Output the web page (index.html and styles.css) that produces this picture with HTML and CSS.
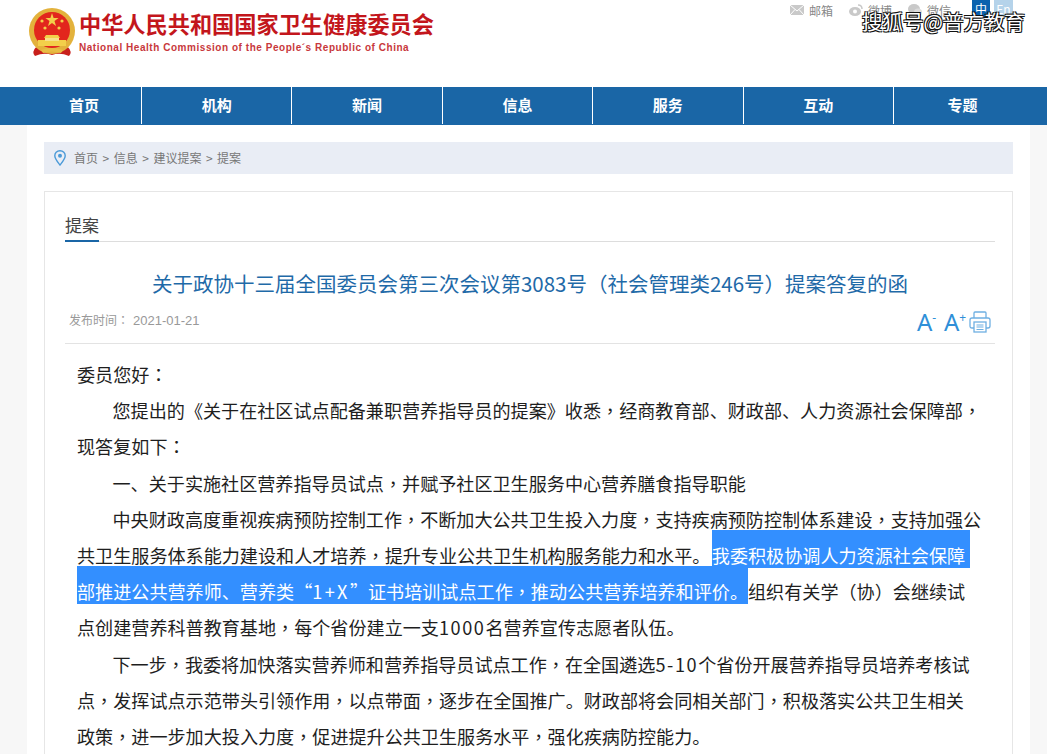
FILE: index.html
```html
<!DOCTYPE html>
<html>
<head>
    <meta charset="UTF-8">
    <title>关于政协十三届全国委员会第三次会议第3083号（社会管理类246号）提案答复的函</title>
    <link rel="stylesheet" href="styles.css">
</head>
<body>
    <header class="header">
        <div class="logo">
            <svg class="emblem" width="48" height="50" viewBox="0 0 48 50">
                <path d="M9 38 Q3 44 7 48 Q16 44 24 47 Q32 44 41 48 Q45 44 39 38 Z" fill="#c8201c"/>
                <circle cx="24" cy="23" r="23" fill="#e3b23c"/>
                <circle cx="24" cy="22" r="18" fill="#e2261d"/>
                <polygon points="24,5 25.6,10 30.6,10 26.5,13 28,18 24,15 20,18 21.5,13 17.400,10 22.400,10" fill="#f3cf4a"/>
                <circle cx="14" cy="13" r="1.600" fill="#f3cf4a"/>
                <circle cx="34" cy="13" r="1.600" fill="#f3cf4a"/>
                <circle cx="17" cy="20" r="1.600" fill="#f3cf4a"/>
                <circle cx="31" cy="20" r="1.600" fill="#f3cf4a"/>
                <path d="M18 27 H30 L32 30 H16 Z" fill="#f3cf4a"/>
                <rect x="10" y="32" width="28" height="6" fill="#f3cf4a"/>
                <rect x="17" y="30" width="14" height="3" fill="#f7e08a"/>
                <path d="M13 42 Q24 38 35 42 L33 45 Q24 42 15 45 Z" fill="#e8bd45"/>
            </svg>
            <div class="logo-text">
                <div class="logo-cn">中华人民共和国国家卫生健康委员会</div>
                <div class="logo-en">National Health Commission of the People´s Republic of China</div>
            </div>
        </div>
        <div class="top-links">
            <span class="top-link">
                <svg width="14" height="10" viewBox="0 0 14 10"><rect width="14" height="10" fill="#c9c9c9"/><path d="M0 0 L7 6 L14 0 M0 10 L5 4.500 M14 10 L9 4.500" fill="none" stroke="#fff" stroke-width="1"/></svg>
                邮箱
            </span>
            <span class="top-link">
                <svg width="14" height="12" viewBox="0 0 14 12"><ellipse cx="6" cy="7.500" rx="6" ry="4.500" fill="#c9c9c9"/><circle cx="6" cy="7.500" r="2" fill="#fff"/><path d="M9 1 Q13 1 13 5" fill="none" stroke="#c9c9c9" stroke-width="1.500"/></svg>
                微博
            </span>
            <span class="top-link">
                <svg width="14" height="12" viewBox="0 0 14 12"><ellipse cx="6" cy="5" rx="6" ry="5" fill="#c9c9c9"/><ellipse cx="10" cy="8" rx="4" ry="3.500" fill="#dcdcdc"/></svg>
                微信
            </span>
            <span class="lang lang-cn">中</span>
            <span class="lang lang-en">En</span>
        </div>
        <div class="watermark">搜狐号@普方教育</div>
    </header>

    <nav class="nav">
        <a class="nav-item nav-first">首页</a>
        <a class="nav-item">机构</a>
        <a class="nav-item">新闻</a>
        <a class="nav-item">信息</a>
        <a class="nav-item">服务</a>
        <a class="nav-item">互动</a>
        <a class="nav-item nav-last">专题</a>
    </nav>

    <main class="main">
        <div class="crumbs">
            <svg class="pin" width="12" height="16" viewBox="0 0 12 16"><path d="M6 .8 C2.800 .8 .8 3.200 .8 5.800 C.8 9 4 12.500 6 15 C8 12.500 11.200 9 11.200 5.800 C11.200 3.200 9.200 .8 6 .8 Z" fill="none" stroke="#4a9ad8" stroke-width="1.400"/><circle cx="6" cy="5.800" r="2" fill="#4a9ad8"/></svg>
            <span>首页</span><i>&gt;</i><span>信息</span><i>&gt;</i><span>建议提案</span><i>&gt;</i><span>提案</span>
        </div>

        <section class="card">
            <div class="tabs"><span class="tab">提案</span></div>
            <h1 class="title">关于政协十三届全国委员会第三次会议第3083号<span class="cp">（</span>社会管理类246号<span class="cp">）</span>提案答复的函</h1>
            <div class="meta">
                <span class="date">发布时间<span class="cp">：</span><span class="date-num">2021-01-21</span></span>
                <div class="tools">
                    <span class="font-btn">A<sup>-</sup></span>
                    <span class="font-btn">A<sup>+</sup></span>
                    <svg class="print" width="22" height="22" viewBox="0 0 22 22" fill="none" stroke="#6fb0e2" stroke-width="1.300">
                        <path d="M5 7 V2 Q5 1 6 1 H16 Q17 1 17 2 V7"/>
                        <path d="M5 17 H3 Q1 17 1 15 V9 Q1 7 3 7 H19 Q21 7 21 9 V15 Q21 17 19 17 H17"/>
                        <rect x="5" y="11" width="12" height="10" fill="#fff"/>
                        <path d="M7.500 14 H14.500 M7.500 16 H14.500 M7.500 18.500 H14.500" stroke-width="1.200"/>
                    </svg>
                </div>
            </div>
            <div class="content">
                <p>委员您好<span class="cp">：</span></p>
                <p class="indent">您提出的《关于在社区试点配备兼职营养指导员的提案》收悉<span class="cp">，</span>经商教育部、财政部、人力资源社会保障部<span class="cp">，</span>现答复如下<span class="cp">：</span></p>
                <p class="indent">一、关于实施社区营养指导员试点<span class="cp">，</span>并赋予社区卫生服务中心营养膳食指导职能</p>
                <p class="indent">中央财政高度重视疾病预防控制工作<span class="cp">，</span>不断加大公共卫生投入力度<span class="cp">，</span>支持疾病预防控制体系建设<span class="cp">，</span>支持加强公共卫生服务体系能力建设和人才培养<span class="cp">，</span>提升专业公共卫生机构服务能力和水平。<span class="selected selected-start">我委积极协调人力资源社会保障</span><span class="selected">部推进公共营养师、营养类“<span class="num">1+X</span>”证书培训试点工作<span class="cp">，</span>推动公共营养培养和评价。</span>组织有关学<span class="cp">（</span>协<span class="cp">）</span>会继续试点创建营养科普教育基地<span class="cp">，</span>每个省份建立一支<span class="num">1000</span>名营养宣传志愿者队伍。</p>
                <p class="indent">下一步<span class="cp">，</span>我委将加快落实营养师和营养指导员试点工作<span class="cp">，</span>在全国遴选<span class="num">5-10</span>个省份开展营养指导员培养考核试点<span class="cp">，</span>发挥试点示范带头引领作用<span class="cp">，</span>以点带面<span class="cp">，</span>逐步在全国推广。财政部将会同相关部门<span class="cp">，</span>积极落实公共卫生相关政策<span class="cp">，</span>进一步加大投入力度<span class="cp">，</span>促进提升公共卫生服务水平<span class="cp">，</span>强化疾病防控能力。</p>
            </div>
        </section>
    </main>
</body>
</html>
```
FILE: styles.css
```css
html, body {
    margin: 0;
    padding: 0;
    height: 754px;
    overflow: hidden;
}
body {
    font-family: "Noto Sans CJK SC", "Noto Sans", sans-serif;
    background-color: #f7f7f7;
    color: #222;
}
/* centred full-width punctuation */
.cp {
    font-family: "Noto Sans CJK TC", sans-serif;
}
.header {
    position: relative;
    height: 87px;
    background-color: #fff;
    display: flex;
    justify-content: space-between;
    align-items: flex-start;
}
.logo {
    display: flex;
    gap: 3px;
    margin: 8px 0 0 28px;
}
.logo-cn {
    font-size: 22.200px;
    line-height: 30px;
    font-weight: 700;
    color: #c3161c;
    white-space: nowrap;
}
.logo-en {
    margin-top: 3px;
    font-family: "Liberation Sans", sans-serif;
    font-size: 10px;
    line-height: 14px;
    font-weight: 700;
    letter-spacing: .54px;
    color: #c8383c;
    white-space: nowrap;
}
.top-links {
    display: flex;
    align-items: flex-start;
    margin-right: 34px;
    font-size: 12px;
    color: #888;
}
.top-link {
    display: flex;
    align-items: center;
    gap: 5px;
    margin-right: 16px;
    height: 20px;
}
.lang {
    height: 18px;
    line-height: 18px;
    text-align: center;
    color: #fff;
}
.lang-cn {
    width: 18px;
    margin-left: 5px;
    background-color: #0a62ae;
}
.lang-en {
    width: 19px;
    margin-left: 4px;
    background-color: #b5d3ea;
}
/* watermark sits over the top links */
.watermark {
    position: absolute;
    left: 862px;
    top: 8px;
    font-size: 20.500px;
    line-height: 26px;
    color: #fff;
    white-space: nowrap;
    text-shadow: 1px 1px 0 #111, -1px 1px 0 #111, 1px -1px 0 #111, -1px -1px 0 #111;
}
.nav {
    display: flex;
    height: 38px;
    padding-left: 27px;
    background-color: #1a66a6;
}
.nav-item {
    width: 150.400px;
    height: 37px;
    line-height: 36px;
    text-align: center;
    font-size: 15px;
    font-weight: 700;
    color: #fff;
    border-right: 1px solid #fff;
    box-sizing: border-box;
}
.nav-first {
    width: 115px;
}
.nav-last {
    width: 137px;
    border-right: none;
}
.main {
    width: 969px;
    height: 629px;
    margin-left: 27px;
    padding: 17px 17px 0;
    background-color: #fff;
}
.crumbs {
    display: flex;
    align-items: center;
    height: 31px;
    padding: 0 0 1px 10px;
    background-color: #e9edf5;
    font-size: 12px;
    color: #777;
}
.pin {
    margin-right: 8px;
}
.crumbs i {
    font-style: normal;
    margin: 0 4.500px;
}
.card {
    margin-top: 17px;
    height: 600px;
    padding: 0 17px 0 20px;
    border: 1px solid #e6e6e6;
}
.tabs {
    height: 49px;
    border-bottom: 1px solid #ddd;
}
.tab {
    display: inline-block;
    height: 50px;
    line-height: 66px;
    box-sizing: border-box;
    font-size: 17px;
    color: #444;
    border-bottom: 2px solid #1a66a6;
}
.title {
    margin: 26px 0 0;
    text-align: center;
    font-size: 20.500px;
    line-height: 30px;
    font-weight: 400;
    color: #1f6aa8;
}
.meta {
    display: flex;
    justify-content: space-between;
    align-items: center;
    height: 45px;
    padding: 0 4px;
    border-bottom: 1px solid #e3e3e3;
}
.date {
    margin-top: -2px;
    font-size: 12px;
    color: #999;
}
.date-num {
    margin-left: 4px;
    font-family: "Liberation Sans", sans-serif;
    font-size: 13px;
}
.tools {
    display: flex;
    align-items: center;
    margin-top: 2px;
}
.font-btn {
    width: 27px;
    font-family: "Noto Sans", sans-serif;
    font-size: 24px;
    line-height: 24px;
    color: #2f8fd8;
}
.font-btn sup {
    font-size: 12px;
    line-height: 0;
}
.print {
    margin-left: -2px;
}
.content {
    padding: 12px 13.700px 0 12px;
    font-size: 18.100px;
    line-height: 36.200px;
    color: #1e1e1e;
}
.content p {
    margin: 0;
}
.content .indent {
    text-indent: 35.500px;
}
.num {
    letter-spacing: 1.600px;
}
/* selection fills the line above the text, so the band sits high */
.selected {
    padding: 12px 0 0;
    background-color: #338fff;
    color: #fff;
}
.selected .num {
    letter-spacing: 2.400px;
}
.selected-start {
    margin-left: 1.500px;
    padding-right: 5px;
}
```
